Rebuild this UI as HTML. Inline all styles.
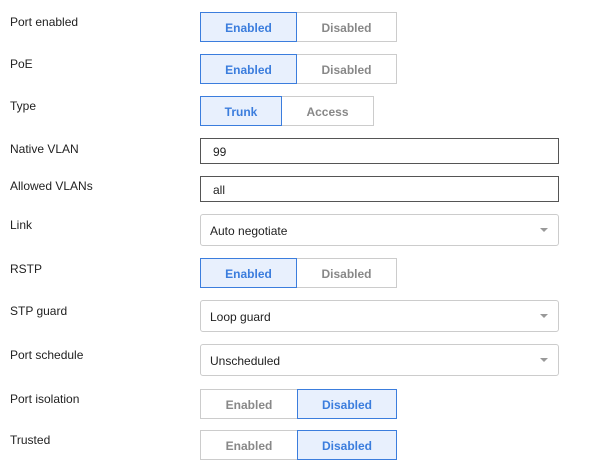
<!DOCTYPE html><html><head><style>
body{margin:0;width:608px;height:470px;background:#fff;font-family:"Liberation Sans",sans-serif;position:relative;overflow:hidden}
.l{position:absolute;left:10px;font-size:12px;color:#222;line-height:14px}
.g{position:absolute;left:200px;height:30px;display:flex;box-sizing:border-box}
.g div{box-sizing:border-box;height:30px;line-height:31px;text-align:center;font-size:12px;font-weight:bold;color:#888;border:1px solid #ccc}
.g div.a{background:#e8f0fd;border-color:#3b7ddd;color:#3b7ddd}
.i{position:absolute;left:200px;width:359px;height:26px;box-sizing:border-box;border:1px solid #555;font-size:12px;line-height:27px;padding-left:12px;color:#222}
.s{position:absolute;left:200px;width:359px;height:32px;box-sizing:border-box;border:1px solid #ccc;border-radius:3px;font-size:12px;line-height:32px;padding-left:9px;color:#222}
.s:after{content:"";position:absolute;right:10px;top:13px;border-left:4px solid transparent;border-right:4px solid transparent;border-top:4px solid #999}
</style></head><body>
<div class="l" style="top:15px">Port enabled</div>
<div class="g" style="top:12px"><div class="a" style="width:97px">Enabled</div><div style="width:100px;border-left:none">Disabled</div></div>
<div class="l" style="top:57px">PoE</div>
<div class="g" style="top:54px"><div class="a" style="width:97px">Enabled</div><div style="width:100px;border-left:none">Disabled</div></div>
<div class="l" style="top:99px">Type</div>
<div class="g" style="top:96px"><div class="a" style="width:82px">Trunk</div><div style="width:92px;border-left:none">Access</div></div>
<div class="l" style="top:142px">Native VLAN</div>
<div class="i" style="top:138px">99</div>
<div class="l" style="top:179px">Allowed VLANs</div>
<div class="i" style="top:176px">all</div>
<div class="l" style="top:218px">Link</div>
<div class="s" style="top:214px">Auto negotiate</div>
<div class="l" style="top:262px">RSTP</div>
<div class="g" style="top:258px"><div class="a" style="width:97px">Enabled</div><div style="width:100px;border-left:none">Disabled</div></div>
<div class="l" style="top:304px">STP guard</div>
<div class="s" style="top:300px">Loop guard</div>
<div class="l" style="top:348px">Port schedule</div>
<div class="s" style="top:344px">Unscheduled</div>
<div class="l" style="top:392px">Port isolation</div>
<div class="g" style="top:389px"><div style="width:97px;border-right:none">Enabled</div><div class="a" style="width:100px">Disabled</div></div>
<div class="l" style="top:433px">Trusted</div>
<div class="g" style="top:430px"><div style="width:97px;border-right:none">Enabled</div><div class="a" style="width:100px">Disabled</div></div>
</body></html>
